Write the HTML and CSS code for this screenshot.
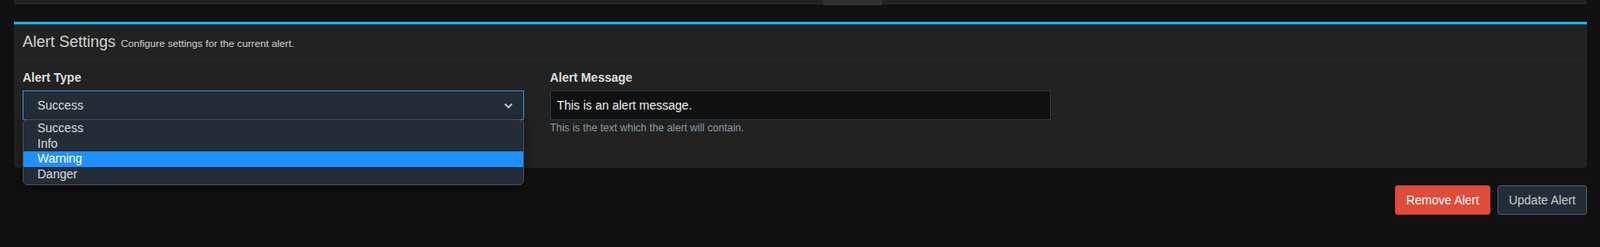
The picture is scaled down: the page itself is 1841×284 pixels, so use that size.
FILE: index.html
```html
<!DOCTYPE html>
<html lang="en">
<head>
    <meta charset="UTF-8">
    <meta name="viewport" content="width=device-width, initial-scale=1.0">
    <title>Alert Settings</title>
    <link rel="stylesheet" href="styles.css">
</head>
<body>
    <div class="page">
        <div class="prev-panel">
            <div class="prev-handle"></div>
        </div>

        <div class="panel">
            <div class="panel-heading">
                <span class="panel-title">Alert Settings</span>
                <small>Configure settings for the current alert.</small>
            </div>
            <div class="panel-body">
                <div class="row">
                    <div class="col">
                        <label>Alert Type</label>
                        <div class="select-wrap">
                            <div class="select">
                                <span>Success</span>
                                <svg class="chevron" width="10" height="7" viewBox="0 0 10 7">
                                    <polyline points="1,1.5 5,5.5 9,1.5" fill="none" stroke="#ccc" stroke-width="1.8"/>
                                </svg>
                            </div>
                            <ul class="dropdown">
                                <li>Success</li>
                                <li>Info</li>
                                <li class="active">Warning</li>
                                <li>Danger</li>
                            </ul>
                        </div>
                    </div>
                    <div class="col">
                        <label>Alert Message</label>
                        <input type="text" class="text-input" value="This is an alert message.">
                        <p class="help">This is the text which the alert will contain.</p>
                    </div>
                    <div class="col"></div>
                </div>
            </div>
        </div>

        <div class="actions">
            <button class="btn btn-remove">Remove Alert</button>
            <button class="btn btn-update">Update Alert</button>
        </div>
    </div>
</body>
</html>
```

FILE: styles.css
```css
body {
    margin: 0;
    padding: 0;
    background-color: #111;
    font-family: "Liberation Sans", Arial, sans-serif;
    font-size: 14px;
    color: #ddd;
}

.page {
    padding: 0 15px 0 16px;
}

.prev-panel {
    height: 4px;
    background-color: #232323;
    border-bottom: 1px solid #1e2a35;
    margin-bottom: 20px;
}

.prev-handle {
    margin-left: 931px;
    width: 66px;
    height: 5px;
    background-color: #303030;
    border: 1px solid #263340;
    border-top: none;
}

.panel {
    background-color: #222;
    border-top: 3px solid #0bb8ea;
    border-radius: 0 0 4px 4px;
}

.panel-heading {
    height: 20px;
    padding: 10px;
    line-height: 20px;
    border-bottom: 1px solid #1d2a36;
}

.panel-title {
    font-size: 18px;
    color: #d2d2d2;
}

.panel-heading small {
    font-size: 11.7px;
    line-height: 1;
    color: #d0d0d0;
    margin-left: 2px;
}

.panel-body {
    padding: 10px 10px 37px;
}

.row {
    display: grid;
    grid-template-columns: repeat(3, 1fr);
    column-gap: 30px;
}

label {
    display: block;
    font-weight: bold;
    line-height: 20px;
    margin-bottom: 5px;
    color: #ddd;
}

.select-wrap {
    position: relative;
}

.select {
    display: flex;
    align-items: center;
    justify-content: space-between;
    height: 20px;
    padding: 6px 12px 6px 16px;
    line-height: 20px;
    background-color: #232d38;
    border: 1px solid #3a8ccc;
    color: #ddd;
}

.chevron {
    display: block;
}

.dropdown {
    position: absolute;
    top: 33px;
    left: 0;
    right: 0;
    margin: 0;
    padding: 1px 0 3px;
    list-style: none;
    background-color: #232d38;
    border: 1px solid #4a4f55;
    border-radius: 6px;
    box-shadow: 0 4px 14px rgba(0, 0, 0, 0.45);
    z-index: 10;
}

.dropdown li {
    line-height: 17.5px;
    padding-left: 16px;
    color: #ddd;
}

.dropdown li.active {
    background-color: #1e90ff;
    color: #fff;
}

.text-input {
    display: block;
    box-sizing: border-box;
    width: 100%;
    height: 34px;
    margin: 0;
    padding: 6px 7px;
    font-family: "Liberation Sans", Arial, sans-serif;
    font-size: 14px;
    line-height: 20px;
    color: #eee;
    background-color: #111;
    border: 1px solid #2c3945;
    outline: none;
}

.help {
    margin: 1px 0 0;
    font-size: 12px;
    line-height: 17px;
    color: #8b99a5;
}

.actions {
    display: flex;
    justify-content: flex-end;
    gap: 8px;
    margin-top: 20px;
}

.btn {
    height: 34px;
    padding: 0 12px;
    font-family: "Liberation Sans", Arial, sans-serif;
    font-size: 14px;
    border-radius: 3px;
    cursor: pointer;
}

.btn-remove {
    background-color: #e04c3a;
    border: 1px solid #c8402f;
    color: #fff;
}

.btn-update {
    background-color: #232d38;
    border: 1px solid #4c5b68;
    color: #ccc;
}
```
